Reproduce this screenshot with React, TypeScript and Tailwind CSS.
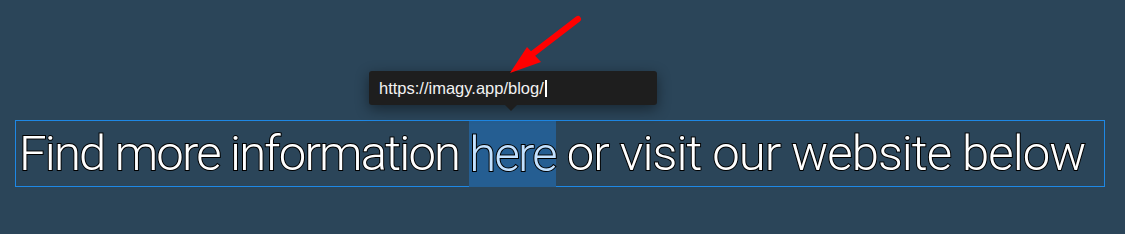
import React from "react";

const outline = "[-webkit-text-stroke:2px_#000] [paint-order:stroke_fill]";

function RedArrow() {
  return (
    <svg className="absolute left-0 top-0" width="1125" height="234" viewBox="0 0 1125 234">
      <line x1="578" y1="19" x2="522" y2="62" stroke="#ff0000" strokeWidth="6" strokeLinecap="round" />
      <polygon points="510,73 527,47 541,62" fill="#ff0000" />
    </svg>
  );
}

function LinkTooltip() {
  return (
    <div className="relative ml-[369px] flex h-[34px] w-[288px] items-center rounded-[3px] bg-[#1e1e1e] pl-[10px] shadow-[0_4px_14px_rgba(0,0,0,0.45)]">
      <span className="font-['Liberation_Sans',Arial,sans-serif] text-[16.5px] text-[#f2f2f2]">https://imagy.app/blog/</span>
      <span className="ml-px h-[17px] w-[2px] bg-white" />
      <span className="absolute left-[136px] top-[34px] h-0 w-0 border-x-[6px] border-t-[6px] border-x-transparent border-t-[#1e1e1e]" />
    </div>
  );
}

export default function App(): React.JSX.Element {
  return (
    <div className="relative flex h-[234px] w-[1125px] flex-col overflow-hidden bg-[#2b4559] pt-[71px]">
      <LinkTooltip />
      <div className="ml-[15px] mt-[15px] flex h-[67px] w-[1090px] items-stretch border border-[#1e88e5] pl-[3px] font-['Roboto',sans-serif] text-[49px] font-light leading-none tracking-[-1.8px] text-white">
        <span className={`self-center whitespace-pre ${outline}`}>Find more information </span>
        <span className={`-mb-px flex items-center bg-[#255e92] text-[#c2e1ff] ${outline}`}>here</span>
        <span className={`self-center whitespace-pre tracking-[-0.95px] ${outline}`}> or visit our website below</span>
      </div>
      <RedArrow />
    </div>
  );
}
